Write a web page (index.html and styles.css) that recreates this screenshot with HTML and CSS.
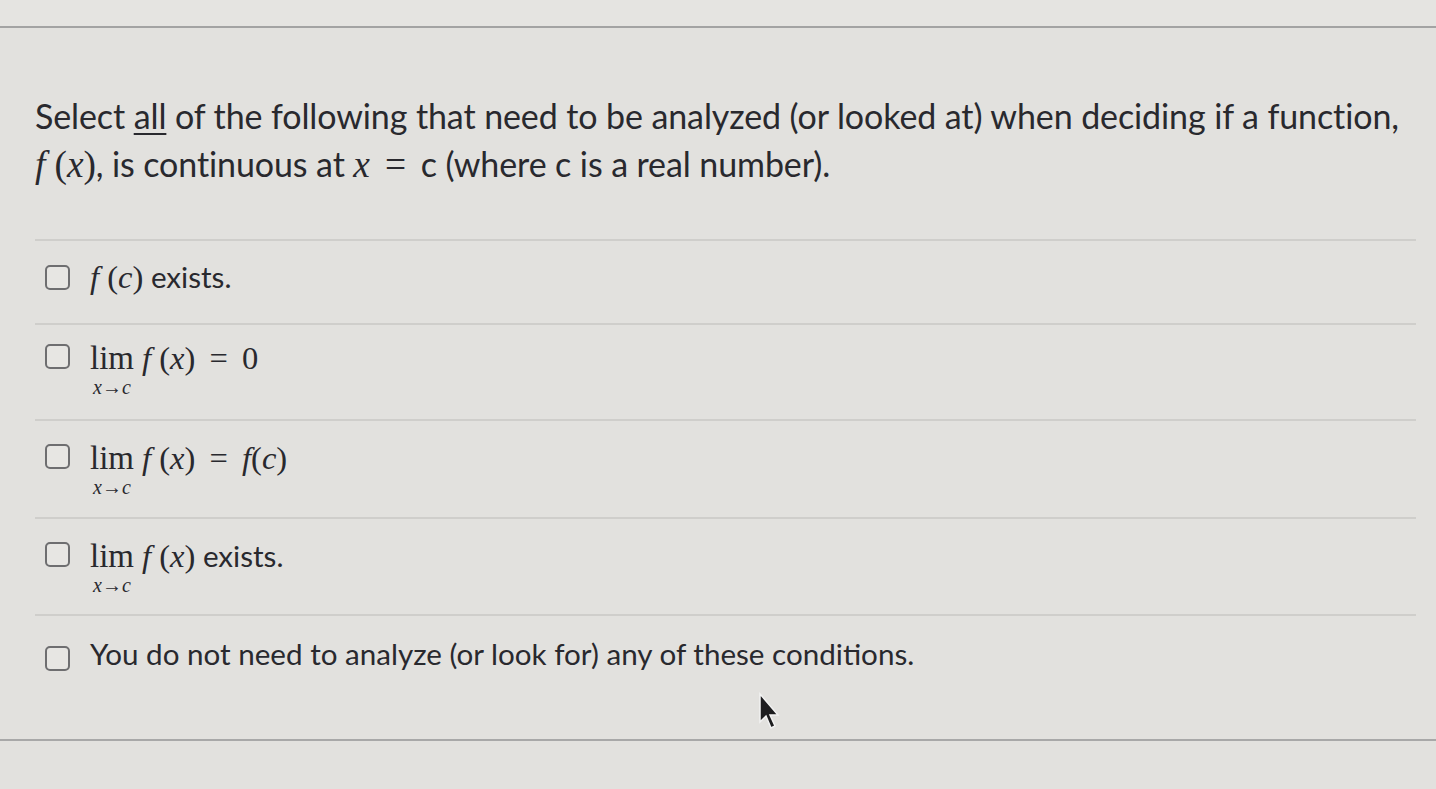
FILE: index.html
```html
<!DOCTYPE html>
<html>
<head>
<meta charset="utf-8">
<link rel="stylesheet" href="styles.css">
</head>
<body>
<div class="topbar"></div>
<main class="content">
  <p class="question">Select <u>all</u> of the following that need to be analyzed (or looked at) when deciding if a function, <span class="m"><i>f</i> (<i>x</i>)</span>, is continuous at <span class="m"><i>x</i> <span class="eq">=</span></span> c (where c is a real number).</p>
  <ul class="options">
    <li class="opt r1"><span class="box"></span><span class="txt"><span class="m"><i>f</i> (<i>c</i>)</span> exists.</span></li>
    <li class="opt r2"><span class="box"></span><span class="txt"><span class="lim"><span class="limw">lim</span><span class="sub"><i>x</i>→<i>c</i></span></span><span class="m"><i>f</i> (<i>x</i>) <span class="eq">=</span> 0</span></span></li>
    <li class="opt r3"><span class="box"></span><span class="txt"><span class="lim"><span class="limw">lim</span><span class="sub"><i>x</i>→<i>c</i></span></span><span class="m"><i>f</i> (<i>x</i>) <span class="eq">=</span> <i>f</i>(<i>c</i>)</span></span></li>
    <li class="opt r4"><span class="box"></span><span class="txt"><span class="lim"><span class="limw">lim</span><span class="sub"><i>x</i>→<i>c</i></span></span><span class="m"><i>f</i> (<i>x</i>)</span> exists.</span></li>
    <li class="opt r5"><span class="box"></span><span class="txt">You do not need to analyze (or look for) any of these conditions.</span></li>
  </ul>
</main>
<div class="bottomline"></div>
<svg class="cursor" width="24" height="40" viewBox="0 0 24 40"><path d="M2 2 L2 30 L8 24 L13 36 L17 34 L12 23 L20 23 Z" fill="#1d1d1f" stroke="#f2f2f2" stroke-width="1.5"/></svg>
</body>
</html>
```
FILE: styles.css
```css
html, body {
  margin: 0;
  padding: 0;
}
body {
  background: #e2e1de;
  color: #29292e;
  font-family: Lato, "Noto Sans", sans-serif;
  width: 1436px;
  height: 789px;
  overflow: hidden;
  position: relative;
}
.topbar {
  height: 26px;
  background: #e5e4e1;
  border-bottom: 2px solid #a3a3a3;
}
.content {
  padding: 0 20px 0 35px;
}
.question {
  margin: 64px 0 0 0;
  font-size: 34px;
  line-height: 48px;
  letter-spacing: -0.1px;
}
.question u {
  text-decoration-thickness: 2px;
  text-underline-offset: 4px;
}
.m {
  font-family: "Liberation Serif", "DejaVu Serif", serif;
  font-size: 1.1em;
  white-space: nowrap;
}
.m i {
  font-style: italic;
}
.eq {
  padding: 0 6px;
}
.options {
  list-style: none;
  margin: 50px 0 0 0;
  padding: 0;
}
.opt {
  display: flex;
  align-items: baseline;
  gap: 20px;
  padding-left: 10px;
  font-size: 29.6px;
  border-top: 2px solid #cfcecb;
  box-sizing: border-box;
}
.box {
  display: inline-block;
  width: 21px;
  height: 21px;
  border: 2px solid #6e6e70;
  border-radius: 5px;
  background: #e7e6e3;
  margin-bottom: -3px;
  flex: none;
}
.r1 { height: 84px; align-items: center; padding-bottom: 10px; }
.r1 .box { margin-bottom: 0; }
.r2 { height: 96px; padding-top: 14px; }
.r3 { height: 98px; padding-top: 18px; }
.r4 { height: 97px; padding-top: 18px; }
.r5 { height: 125px; padding-top: 20px; align-items: flex-start; }
.r5 .box { margin-top: 10px; }
.lim {
  display: inline-flex;
  flex-direction: column;
  align-items: center;
  margin-right: 8px;
  font-family: "Liberation Serif", "DejaVu Serif", serif;
}
.limw {
  font-size: 33px;
  line-height: 38px;
}
.sub {
  font-size: 20px;
  line-height: 20px;
}
.bottomline {
  border-top: 2px solid #a8a8a8;
}
.cursor {
  position: absolute;
  left: 758px;
  top: 692px;
}
```
